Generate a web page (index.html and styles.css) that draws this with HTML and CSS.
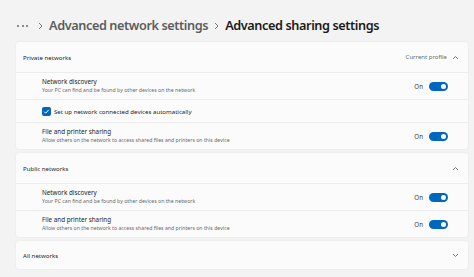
FILE: index.html
```html
<!DOCTYPE html>
<html lang="en">
<head>
<meta charset="utf-8">
<title>Advanced sharing settings</title>
<link rel="stylesheet" href="styles.css">
</head>
<body>
<div class="page">
  <nav class="crumbs">
    <span class="more"><i></i><i></i><i></i></span>
    <svg class="sep first" width="5" height="8" viewBox="0 0 5 8"><path d="M1 1l3 3-3 3" fill="none" stroke="#7a7a7a" stroke-width="1"/></svg>
    <span class="crumb">Advanced network settings</span>
    <svg class="sep" width="5" height="8" viewBox="0 0 5 8"><path d="M1 1l3 3-3 3" fill="none" stroke="#7a7a7a" stroke-width="1"/></svg>
    <span class="crumb current">Advanced sharing settings</span>
  </nav>

  <main class="groups">
    <section class="expander">
      <div class="head">
        <span class="head-title">Private networks</span>
        <span class="head-right"><span class="meta">Current profile</span>
          <svg class="chev" width="7" height="5" viewBox="0 0 7 5"><path d="M1 4l2.5-2.5L6 4" fill="none" stroke="#6a6a6a" stroke-width="0.9"/></svg></span>
      </div>
      <div class="row">
        <div class="text"><div class="title">Network discovery</div><div class="sub">Your PC can find and be found by other devices on the network</div></div>
        <div class="ctl"><span class="state">On</span><span class="toggle"></span></div>
      </div>
      <div class="row check-row">
        <span class="checkbox"><svg width="7" height="7" viewBox="0 0 7 7"><path d="M1.2 3.7l1.5 1.5 3.1-3.4" fill="none" stroke="#fff" stroke-width="1"/></svg></span>
        <span class="check-label">Set up network connected devices automatically</span>
      </div>
      <div class="row">
        <div class="text"><div class="title">File and printer sharing</div><div class="sub">Allow others on the network to access shared files and printers on this device</div></div>
        <div class="ctl"><span class="state">On</span><span class="toggle"></span></div>
      </div>
    </section>

    <section class="expander">
      <div class="head">
        <span class="head-title">Public networks</span>
        <span class="head-right">
          <svg class="chev" width="7" height="5" viewBox="0 0 7 5"><path d="M1 4l2.5-2.5L6 4" fill="none" stroke="#6a6a6a" stroke-width="0.9"/></svg></span>
      </div>
      <div class="row">
        <div class="text"><div class="title">Network discovery</div><div class="sub">Your PC can find and be found by other devices on the network</div></div>
        <div class="ctl"><span class="state">On</span><span class="toggle"></span></div>
      </div>
      <div class="row">
        <div class="text"><div class="title">File and printer sharing</div><div class="sub">Allow others on the network to access shared files and printers on this device</div></div>
        <div class="ctl"><span class="state">On</span><span class="toggle"></span></div>
      </div>
    </section>

    <section class="expander">
      <div class="head last">
        <span class="head-title">All networks</span>
        <span class="head-right">
          <svg class="chev" width="7" height="5" viewBox="0 0 7 5"><path d="M1 1l2.5 2.5L6 1" fill="none" stroke="#6a6a6a" stroke-width="0.9"/></svg></span>
      </div>
    </section>
  </main>
</div>
</body>
</html>
```

FILE: styles.css
```css
* { box-sizing: border-box; }
html, body { margin: 0; padding: 0; }
body {
  background: #f3f3f3;
  font-family: "Noto Sans", "Open Sans", sans-serif;
  color: #1b1b1b;
  width: 474px;
  height: 277px;
  overflow: hidden;
}
.page {
  padding: 14px 6px 0 16px;
}
.crumbs {
  display: flex;
  align-items: center;
  height: 22px;
  margin-bottom: 6px;
  font-size: 12.7px;
  font-weight: 600;
  letter-spacing: -0.4px;
  white-space: nowrap;
}
.more {
  display: flex;
  gap: 2.5px;
  padding-left: 1px;
  margin-right: 10px;
  margin-top: 2px;
}
.more i {
  display: block;
  width: 2px;
  height: 2px;
  border-radius: 1px;
  background: #6a6a6a;
}
.sep { margin: 1px 6px 0 0; }
.crumb { color: #5d5d5d; margin-right: 6px; }
.crumb.current { color: #1a1a1a; }

.groups {
  display: flex;
  flex-direction: column;
  gap: 4px;
}
.expander {
  background: #fbfbfb;
  border-radius: 3px;
  box-shadow: 0 0 0 0.5px #e9e9e9;
  display: flex;
  flex-direction: column;
}
.head {
  display: flex;
  align-items: center;
  justify-content: space-between;
  height: 30px;
  padding: 0 9px 0 7px;
  font-size: 6.1px;
}
.head.last { height: 28px; }
.head-right {
  display: flex;
  align-items: center;
  gap: 5px;
}
.meta { color: #6b6b6b; font-size: 6px; }
.chev { display: block; }
.row {
  display: flex;
  align-items: center;
  justify-content: space-between;
  border-top: 1px solid #ececec;
  height: 27px;
  padding: 0 20px 0 26px;
}
.text { display: flex; flex-direction: column; gap: 1px; }
.title { font-size: 6.3px; line-height: 8px; color: #1b1b1b; }
.sub { font-size: 5.2px; line-height: 7px; color: #6a6a6a; }
.ctl { display: flex; align-items: center; gap: 6px; }
.state { font-size: 6.2px; color: #3a3a3a; }
.toggle {
  position: relative;
  width: 19px;
  height: 9px;
  border-radius: 5px;
  background: #0067c0;
}
.toggle::after {
  content: "";
  position: absolute;
  right: 2.5px;
  top: 2px;
  width: 5px;
  height: 5px;
  border-radius: 50%;
  background: #fff;
}
.check-row {
  justify-content: flex-start;
  gap: 3px;
  height: 23px;
}
.checkbox {
  width: 9px;
  height: 9px;
  border-radius: 2px;
  background: #0067c0;
  display: flex;
  align-items: center;
  justify-content: center;
}
.checkbox svg { display: block; }
.check-label { font-size: 6.1px; color: #1b1b1b; }
```
